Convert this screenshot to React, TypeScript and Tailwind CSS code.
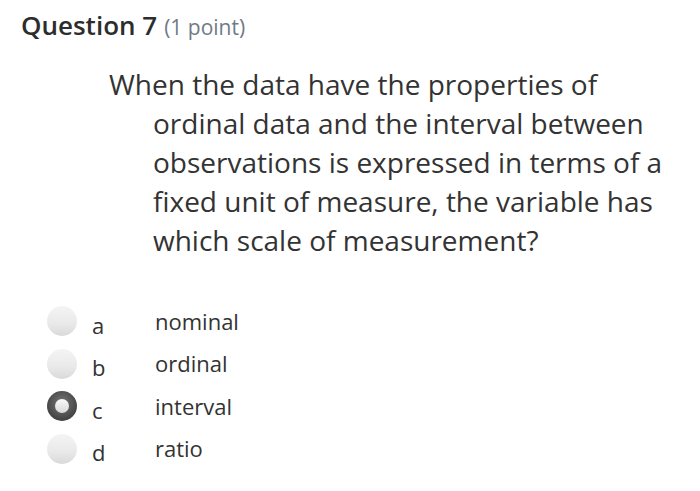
import React from "react";

const options = [
  { letter: "a", text: "nominal", selected: false },
  { letter: "b", text: "ordinal", selected: false },
  { letter: "c", text: "interval", selected: true },
  { letter: "d", text: "ratio", selected: false },
];

function Radio({ selected }: { selected: boolean }) {
  if (selected) {
    return (
      <div className="w-[30px] h-[30px] rounded-full bg-[radial-gradient(circle_at_50%_40%,#777_0%,#444_70%,#2a2a2a_100%)] flex items-center justify-center">
        <div className="w-[14px] h-[14px] rounded-full bg-[linear-gradient(180deg,#fafafa,#d8d8d8)]" />
      </div>
    );
  }
  return (
    <div className="w-[30px] h-[30px] rounded-full bg-[linear-gradient(180deg,#f4f4f4_0%,#e9e9e9_60%,#d9d9d9_100%)]" />
  );
}

export default function App() {
  return (
    <div
      className="w-[700px] h-[491px] bg-white text-[#333333] relative"
      style={{ fontFamily: '"Open Sans", sans-serif' }}
    >
      <div className="pt-[6px] pl-[21px] flex items-baseline">
        <span className="text-[26px] font-semibold text-[#2d2d2d]">Question 7</span>
        <span className="text-[21px] text-[#707a85] ml-[7px]">(1 point)</span>
      </div>
      <p className="mt-[20px] pl-[153px] pr-[20px] indent-[-44px] text-[28px] leading-[39px] text-[#333]">
        When the data have the properties of ordinal data and the interval between observations is expressed in terms of a fixed unit of measure, the variable has which scale of measurement?
      </p>
      <div className="mt-[46px] flex flex-col gap-[12.5px]">
        {options.map((o) => (
          <div key={o.letter} className="flex items-center h-[30px]">
            <div className="ml-[47px]">
              <Radio selected={o.selected} />
            </div>
            <span className="ml-[15px] w-[63px] text-[22px] text-[#333] translate-y-[4px]">{o.letter}</span>
            <span className="text-[22px] text-[#333]">{o.text}</span>
          </div>
        ))}
      </div>
    </div>
  );
}
